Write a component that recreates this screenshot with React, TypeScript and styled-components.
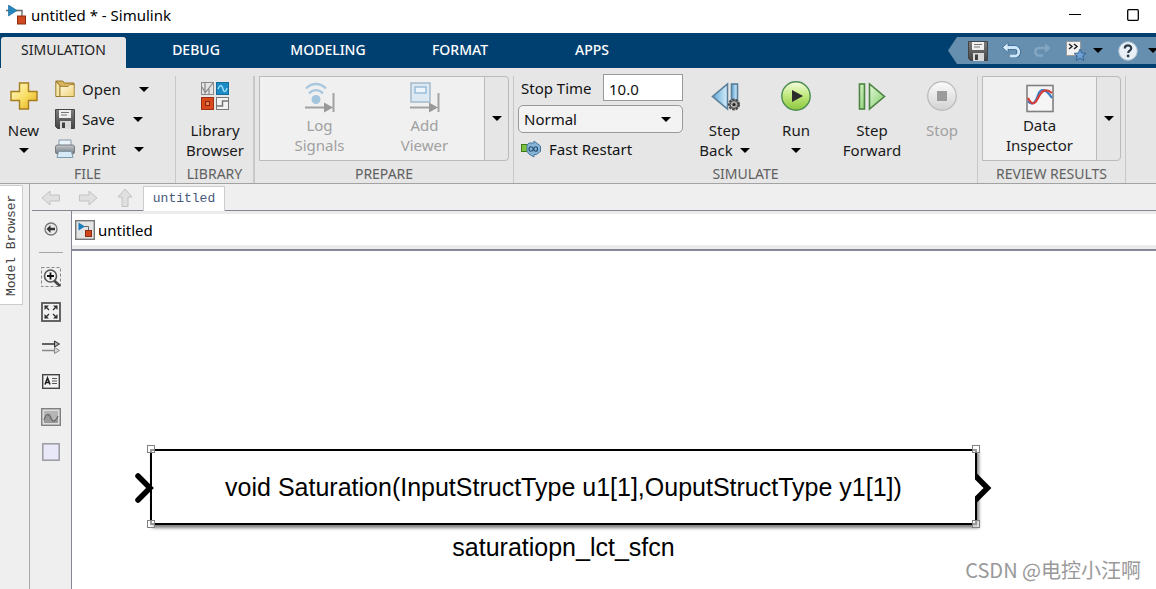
import React from "react";
import styled, { createGlobalStyle } from "styled-components";

const ui = `"Noto Sans", "Open Sans", sans-serif`;
const mono = `"Liberation Mono", monospace`;

const Global = createGlobalStyle`
  * { box-sizing: border-box; }
  body { margin: 0; background: #fff; }
  button, input, select { font: inherit; color: inherit; }
  button { border: 0; background: none; padding: 0; cursor: pointer; }
  svg { display: block; flex: none; }
`;

const Window = styled.div`
  display: flex;
  flex-direction: column;
  min-height: 100vh;
  overflow: hidden;
  font: 14px/20px ${ui};
  color: #1a1a1a;
`;

const TitleBar = styled.header`
  display: flex;
  align-items: center;
  height: 33px;
  padding: 0 0 4px 6px;
  background: #fff;
  color: #000;
`;
const Title = styled.h1`
  margin: 0 0 0 5px;
  flex: 1;
  font-size: 15px;
  font-weight: 400;
`;
const WindowButton = styled.button`
  display: flex;
  align-items: center;
  justify-content: center;
  width: 58px;
  height: 28px;
  &:last-child { margin-right: -6px; }
`;

const TabBar = styled.nav`
  display: flex;
  height: 35px;
  padding: 4px 0 0 1px;
  background: #004070;
`;
const Tabs = styled.div`
  display: flex;
  flex: 1;
`;
const Tab = styled.button<{ $active?: boolean }>`
  width: ${(p) => (p.$active ? 125 : 132)}px;
  margin-right: ${(p) => (p.$active ? 4 : 0)}px;
  padding-bottom: 6px;
  border-radius: 3px 3px 0 0;
  background: ${(p) => (p.$active ? "#e6e6e6" : "transparent")};
  color: ${(p) => (p.$active ? "#222" : "#fff")};
  font-weight: ${(p) => (p.$active ? 400 : 500)};
`;
const QuickAccess = styled.div`
  display: flex;
  align-items: center;
  height: 27px;
  padding-left: 20px;
  margin-right: -2px;
  background: #668eae;
  clip-path: polygon(9px 0, 100% 0, 100% 100%, 9px 100%, 0 50%);
`;
const QuickButton = styled.button<{ $w: number }>`
  display: flex;
  align-items: center;
  width: ${(p) => p.$w}px;
  height: 27px;
`;

const Ribbon = styled.div`
  display: flex;
  height: 116px;
  padding-top: 8px;
  border-bottom: 1px solid #a3a3a3;
  background: #e6e6e6;
  font-size: 15px;
`;
const Section = styled.section<{ $w: number; $thick?: boolean }>`
  display: flex;
  flex-direction: column;
  flex: none;
  width: ${(p) => p.$w}px;
  border-right: ${(p) => (p.$thick ? 2 : 1)}px solid #c8c8c8;
`;
const SectionBody = styled.div`
  display: flex;
  height: 89px;
  padding: 0 4px;
`;
const SectionName = styled.h2`
  margin: 0;
  font-size: 14px;
  line-height: 18px;
  font-weight: 400;
  text-align: center;
  color: #606060;
`;
const BigButton = styled.button<{ $w: number }>`
  display: flex;
  flex-direction: column;
  align-items: center;
  width: ${(p) => p.$w}px;
  padding-top: 5px;
  flex: none;
  &:disabled { color: #a0a0a0; cursor: default; }
`;
const IconSlot = styled.span`
  display: flex;
  align-items: center;
  height: 30px;
  margin-bottom: 9px;
`;
const Line = styled.span`
  display: flex;
  align-items: center;
  gap: 7px;
  height: 20px;
  white-space: nowrap;
`;
const Rows = styled.div`
  display: grid;
  grid-auto-rows: 30px;
  margin-top: -2px;
  padding-left: 12px;
`;
const Row = styled.div`
  display: flex;
  align-items: center;
`;
const RowButton = styled.button`
  display: flex;
  align-items: center;
  gap: 7px;
  margin-right: 15px;
`;
const CaretButton = styled.button`
  display: flex;
  align-items: center;
  justify-content: center;
  width: 16px;
  height: 20px;
`;
const Gallery = styled.div`
  display: flex;
  height: 85px;
  border: 1px solid #bababa;
  border-radius: 0 4px 4px 0;
`;
const GalleryItems = styled.div<{ $pad?: number }>`
  display: flex;
  padding: 0 ${(p) => p.$pad ?? 0}px;
  background: #f0f0f0;
  ${IconSlot} { height: 31px; margin-bottom: 2px; }
`;
const GalleryMore = styled.button`
  display: flex;
  align-items: center;
  justify-content: center;
  width: 24px;
  border-left: 1px solid #bababa;
`;
const Form = styled.div`
  width: 165px;
  margin: -2px 6px 0 0;
  color: #111;
`;
const Field = styled.label`
  display: flex;
  align-items: center;
  justify-content: space-between;
  padding-left: 3px;
`;
const TextInput = styled.input`
  width: 80px;
  height: 27px;
  padding: 2px 5px 0;
  border: 1px solid #999;
  background: #fff;
`;
const SelectBox = styled.div`
  display: grid;
  align-items: center;
  margin-top: 4px;
  & > * { grid-area: 1 / 1; }
  svg { justify-self: end; margin-right: 12px; pointer-events: none; }
`;
const Select = styled.select`
  appearance: none;
  width: 100%;
  height: 28px;
  padding: 0 5px;
  border: 1px solid #999;
  border-radius: 5px;
  background: #f3f3f3;
`;
const FastRestart = styled.button`
  display: flex;
  align-items: center;
  gap: 8px;
  margin-top: 6px;
  padding-left: 3px;
`;

const Workspace = styled.div`
  display: flex;
  flex: 1;
  background: #efefef;
`;
const BrowserStrip = styled.aside`
  width: 30px;
  padding-top: 1px;
  border-right: 1px solid #aaa;
`;
const BrowserTab = styled.button`
  width: 23px;
  height: 120px;
  padding-right: 2px;
  border: 1px solid #ccc;
  border-right: 0;
  background: #fff;
  color: #444;
  font: 13px/20px ${mono};
  writing-mode: vertical-rl;
  transform: rotate(180deg);
`;
const Editor = styled.div`
  display: flex;
  flex-direction: column;
  flex: 1;
  min-width: 0;
`;
const DocBar = styled.div`
  display: flex;
  height: 27px;
  margin-left: 2px;
  padding-top: 2px;
  border-bottom: 1px solid #858894;
`;
const NavButton = styled.button`
  width: 37px;
  display: flex;
  align-items: center;
  justify-content: center;
`;
const DocTab = styled.button`
  width: 82px;
  height: 25px;
  border: 1px solid #ccc;
  border-bottom: 0;
  background: #fff;
  color: #46597c;
  font: 13px/20px ${mono};
`;
const EditorBody = styled.div`
  display: flex;
  flex: 1;
`;
const Palette = styled.div`
  display: flex;
  flex-direction: column;
  align-items: center;
  width: 41px;
`;
const Tool = styled.button<{ $h?: number }>`
  display: flex;
  align-items: center;
  justify-content: center;
  width: 28px;
  height: ${(p) => p.$h ?? 35}px;
`;
const Rule = styled.hr`
  width: 24px;
  margin: 5px 0 6px;
  border: 0;
  border-top: 1px solid #a5a5a5;
`;
const Document = styled.main`
  display: flex;
  flex-direction: column;
  flex: 1;
  min-width: 0;
  border-left: 1px solid #858894;
`;
const Crumbs = styled.div`
  display: flex;
  align-items: center;
  gap: 3px;
  height: 40px;
  padding: 0 0 1px 3px;
  border-bottom: 2px solid #858894;
  color: #000;
  background: linear-gradient(#ececec 3px, #fff 3px 34px, #ececec 34px);
  font-size: 15px;
`;
const Canvas = styled.div`
  position: relative;
  flex: 1;
  min-height: 338px;
  background: #fff;
  font-family: "Liberation Sans", sans-serif;
  font-size: 25px;
  line-height: 28px;
  color: #000;
`;
const Node = styled.figure`
  position: absolute;
  left: 78px;
  top: 198px;
  width: 827px;
  margin: 0;
  text-align: center;
`;
const Block = styled.div`
  display: flex;
  align-items: center;
  justify-content: center;
  height: 76px;
  border: 2px solid #000;
  background: #fff;
  box-shadow: 2px 3px 3px rgba(0, 0, 0, 0.5);
`;
const Handle = styled.i<{ $x: "left" | "right"; $y: number }>`
  position: absolute;
  ${(p) => p.$x}: -3px;
  top: ${(p) => p.$y}px;
  width: 8px;
  height: 8px;
  border: 1px solid #808080;
  background: rgba(255, 255, 255, 0.6);
`;
const Port = styled.svg<{ $x: number }>`
  position: absolute;
  left: ${(p) => p.$x}px;
  top: 22px;
`;
const NodeName = styled.figcaption`
  margin-top: 8px;
`;
const Watermark = styled.div`
  position: absolute;
  right: 15px;
  bottom: 5px;
  font: 20px/28px "Noto Sans CJK SC", sans-serif;
  color: #999;
`;

const Caret = () => (
  <svg width="10" height="5" viewBox="0 0 10 5"><path d="M0 0h10L5 5z" fill="#000" /></svg>
);

const SimulinkIcon = () => (
  <svg width="20" height="20" viewBox="0 0 20 20">
    <path d="M0 5.500h3M10 5.500h6v6" stroke="#666" strokeWidth="1.300" fill="none" />
    <path d="M2.500 0v11L11 5.500z" fill="#2386c0" stroke="#14618f" strokeWidth=".6" />
    <rect x="11.500" y="11" width="8" height="8" fill="#d04a20" stroke="#8b2c10" />
  </svg>
);

const PlusIcon = () => (
  <svg width="28" height="28" viewBox="0 0 28 28">
    <defs><linearGradient id="gold" x2="1" y2="1"><stop stopColor="#fffbd0" /><stop offset=".55" stopColor="#f8dc60" /><stop offset="1" stopColor="#e0a818" /></linearGradient></defs>
    <path d="M9.500 1h9v8.500H27v9h-8.500V27h-9v-8.500H1v-9h8.500z" fill="url(#gold)" stroke="#a67c1c" strokeWidth="1.400" />
  </svg>
);

const FolderIcon = () => (
  <svg width="20" height="20" viewBox="0 0 20 20">
    <defs><linearGradient id="paper" x2="1" y2="1"><stop stopColor="#fffbe0" /><stop offset="1" stopColor="#efd27a" /></linearGradient></defs>
    <path d="M.8 2h7l1.500 2H19v4H6z" fill="#d8b45c" stroke="#8f6c1e" strokeWidth=".9" />
    <path d="M.8 2.500L5 6.500v11H.8z" fill="#f6e6a8" stroke="#8f6c1e" strokeWidth=".9" />
    <path d="M5 17.500V7.500h8l2-2h4.200v12z" fill="url(#paper)" stroke="#a27f2c" strokeWidth=".9" />
  </svg>
);

const DiskIcon = () => (
  <svg width="20" height="20" viewBox="0 0 20 20">
    <defs><linearGradient id="steel" x2="0" y2="1"><stop stopColor="#7c7c7c" /><stop offset="1" stopColor="#454545" /></linearGradient></defs>
    <path d="M.5.500h19v19h-17l-2-2z" fill="url(#steel)" stroke="#444" />
    <path d="M4 1h12v8H4z" fill="#efefef" />
    <path d="M6 3.500h8M6 6h6" stroke="#777" strokeWidth="1.200" />
    <path d="M5 12h11v8H5z" fill="#d8d8d8" />
    <path d="M7 13.500h3V19H7z" fill="#404040" />
  </svg>
);

const PrinterIcon = () => (
  <svg width="20" height="20" viewBox="0 0 20 20">
    <defs><linearGradient id="body" x2="0" y2="1"><stop stopColor="#c4c8cc" /><stop offset="1" stopColor="#71777d" /></linearGradient></defs>
    <path d="M4 1h12v7H4z" fill="#eaf3fa" stroke="#8898a6" />
    <rect x=".5" y="6" width="19" height="9" rx="2" fill="url(#body)" stroke="#767c82" />
    <path d="M3.500 12.500h13l1.500 6H2z" fill="#d5e9f7" stroke="#7e98ac" />
  </svg>
);

const LibraryIcon = () => (
  <svg width="28" height="28" viewBox="0 0 28 28">
    <rect x=".5" y=".5" width="12" height="12" fill="#e4e4e4" stroke="#8a8a8a" />
    <path d="M4 1v10l8-10M4 10L1 5M8 12V7" stroke="#888" strokeWidth="1.200" fill="none" />
    <rect x="15.500" y=".5" width="12" height="12" fill="#1b8bc6" stroke="#186b9a" />
    <path d="M17 7c2-5 4-4 5 0s3 3 4-1" stroke="#a6e2ff" strokeWidth="1.300" fill="none" />
    <rect x=".5" y="15.500" width="12" height="12" fill="#d9491c" stroke="#9c3212" />
    <rect x="4.500" y="19.500" width="4" height="4" fill="#ee7c56" stroke="#842508" />
    <rect x="15.500" y="15.500" width="12" height="12" fill="#f2f2f2" stroke="#777" />
    <path d="M16 24h5.500v-5H27" stroke="#777" strokeWidth="1.500" fill="none" />
  </svg>
);

const ArrowLine = () => (
  <>
    <path d="M0 25.500h22M28.500 11v19" stroke="#a2a2a2" strokeWidth="2" />
    <path d="M19 20.500v10l9-5z" fill="#999" />
  </>
);
const LogIcon = () => (
  <svg width="30" height="31" viewBox="0 0 30 31">
    <path d="M1 6.500c6-6 14-6 20 0M4 11.500c4-4.500 10-4.500 14 0" stroke="#a9c8df" strokeWidth="2.400" fill="none" />
    <circle cx="11" cy="17.500" r="4.500" fill="#a4c5de" />
    <ArrowLine />
  </svg>
);
const ViewerIcon = () => (
  <svg width="30" height="31" viewBox="0 0 30 31">
    <rect x="1" y="1" width="19" height="19" fill="#dce9f3" stroke="#9fb6c8" strokeWidth="1.400" />
    <rect x="5" y="5" width="11" height="6" fill="#eef5fa" stroke="#94bad8" strokeWidth="1.400" />
    <ArrowLine />
  </svg>
);

const FastRestartIcon = () => (
  <svg width="20" height="18" viewBox="0 0 20 18">
    <rect x=".5" y="4.500" width="7" height="7" fill="#7fc241" stroke="#3e7a1c" />
    <path d="M8 3h5V1l6.500 5v5.500l-4 3H13V17l-5-3-2-2.500V5z" fill="#86b4d6" stroke="#47799f" />
    <path d="M8 9c0-3 3.500-3 4.500 0s4 3 4 0-3-3-4 0S8 12 8 9" stroke="#234d70" strokeWidth="1.200" fill="none" />
  </svg>
);

const StepBackIcon = () => (
  <svg width="30" height="30" viewBox="0 0 30 30">
    <defs><linearGradient id="blue" x2="1"><stop stopColor="#5fa6d4" /><stop offset="1" stopColor="#d8effc" /></linearGradient></defs>
    <path d="M17.500 3v25L2.500 15.500z" fill="url(#blue)" stroke="#5b7f9a" strokeWidth="1.600" />
    <rect x="21.500" y="3" width="6" height="20" fill="url(#blue)" stroke="#5b7f9a" strokeWidth="1.600" />
    <circle cx="24" cy="23.500" r="5" fill="#b5b5b5" stroke="#484848" strokeWidth="2" strokeDasharray="2.500 1" />
    <circle cx="24" cy="23.500" r="4" fill="#aaa" stroke="#444" />
    <circle cx="24" cy="23.500" r="1.600" fill="#222" />
  </svg>
);
const RunIcon = () => (
  <svg width="30" height="30" viewBox="0 0 30 30">
    <defs><linearGradient id="lime" x2="0" y2="1"><stop stopColor="#f5ffe0" /><stop offset=".5" stopColor="#bfe77a" /><stop offset="1" stopColor="#8cc63e" /></linearGradient></defs>
    <circle cx="15" cy="15" r="14.200" fill="url(#lime)" stroke="#4d8c50" strokeWidth="1.400" />
    <path d="M11 9v12l11-6z" fill="#2b2b2b" />
  </svg>
);
const StepForwardIcon = () => (
  <svg width="30" height="30" viewBox="0 0 30 30">
    <defs><linearGradient id="mint" x2="1" y2="1"><stop stopColor="#e2f8d8" /><stop offset="1" stopColor="#84cc6c" /></linearGradient></defs>
    <rect x="2.500" y="3" width="5" height="25" fill="url(#mint)" stroke="#4b8440" strokeWidth="1.600" />
    <path d="M12.500 3v25L27.500 15.500z" fill="url(#mint)" stroke="#4b8440" strokeWidth="1.600" />
  </svg>
);
const StopIcon = () => (
  <svg width="30" height="30" viewBox="0 0 30 30">
    <defs><linearGradient id="pale" x2="0" y2="1"><stop stopColor="#fbfbfb" /><stop offset="1" stopColor="#d2d2d2" /></linearGradient></defs>
    <circle cx="15" cy="15" r="14.300" fill="url(#pale)" stroke="#b8b8b8" strokeWidth="1.200" />
    <rect x="10" y="10" width="10" height="10" fill="#9b9b9b" />
  </svg>
);
const InspectorIcon = () => (
  <svg width="28" height="31" viewBox="0 0 28 31">
    <rect x="1" y="3.500" width="26" height="26" fill="#f5f5f5" stroke="#808080" strokeWidth="1.600" />
    <path d="M2 19c5 6 8 0 10-6s7-8 14 3" stroke="#3a7fc4" strokeWidth="2.200" fill="none" />
    <path d="M2 16c4 8 7 6 10 0s7-11 14-5" stroke="#d63c3c" strokeWidth="2.200" fill="none" />
  </svg>
);

const UndoIcon = () => (
  <svg width="20" height="18" viewBox="0 0 20 18">
    <path d="M5 5.500h8c5 0 5 8.500 0 8.500H8" stroke="#2f5f88" strokeWidth="4.200" fill="none" />
    <path d="M.5 5.500L6 .5v10z" fill="#dcefff" stroke="#2f5f88" strokeWidth=".7" />
    <path d="M5 5.500h8c5 0 5 8.500 0 8.500H8" stroke="#cde6f9" strokeWidth="2.800" fill="none" />
  </svg>
);
const RedoIcon = () => (
  <svg width="18" height="18" viewBox="0 0 18 18">
    <path d="M13 6H6c-5 0-5 7.500 0 7.500h4" stroke="#82a6c2" strokeWidth="2.600" fill="none" />
    <path d="M17.500 6L12 1v10z" fill="#82a6c2" />
  </svg>
);
const ShortcutIcon = () => (
  <svg width="20" height="20" viewBox="0 0 20 20">
    <rect x=".5" y=".5" width="14" height="14" fill="#f2f2f2" stroke="#999" />
    <path d="M3 3l3 2.500L3 8M8 3l3 2.500L8 8" stroke="#222" strokeWidth="1.500" fill="none" />
    <path d="M14 8l1.800 4 4.200.4-3.200 2.700 1 4.400-3.800-2.300-3.800 2.300 1-4.400L8 12.400l4.200-.4z" fill="#6d9fd0" stroke="#2b5a8c" strokeWidth=".8" />
  </svg>
);
const HelpIcon = () => (
  <svg width="20" height="20" viewBox="0 0 20 20">
    <circle cx="10" cy="10" r="9.300" fill="#e9f0f6" stroke="#adc0d0" />
    <path d="M6.800 7.500c0-4 6.400-4 6.400-.3 0 2.400-3 2.400-3 4.800" stroke="#2a3b4c" strokeWidth="2.200" fill="none" />
    <circle cx="10.100" cy="15" r="1.400" fill="#2a3b4c" />
  </svg>
);

const NavArrow = ({ turn }: { turn: number }) => (
  <svg width="20" height="20" viewBox="0 0 20 20">
    <path transform={`rotate(${turn} 10 10)`} d="M1 10l8-7v4h9.500v6H9v4z" fill="#e0e0e0" stroke="#c2c2c2" />
  </svg>
);
const CollapseIcon = () => (
  <svg width="14" height="14" viewBox="0 0 14 14">
    <circle cx="7" cy="7" r="6" fill="#eaeaea" stroke="#777" strokeWidth="1.300" />
    <path d="M2.500 7L6.500 3v2.700H11v2.600H6.500V11z" fill="#333" />
  </svg>
);
const ZoomIcon = () => (
  <svg width="20" height="20" viewBox="0 0 20 20">
    <rect x=".5" y=".5" width="19" height="19" fill="none" stroke="#888" strokeDasharray="3 2" />
    <path d="M13 13.500l6 5.500" stroke="#444" strokeWidth="2.600" />
    <circle cx="9.500" cy="9" r="6" fill="#f3f3f3" stroke="#555" strokeWidth="1.600" />
    <path d="M6 9h7M9.500 5.500v7" stroke="#111" strokeWidth="1.800" />
  </svg>
);
const FitIcon = () => (
  <svg width="20" height="20" viewBox="0 0 20 20">
    <rect x="1" y="1" width="18" height="18" fill="#f2f2f2" stroke="#555" strokeWidth="1.800" />
    <path d="M3.500 3.500H8L3.500 8zM16.500 3.500H12L16.500 8zM3.500 16.500H8L3.500 12zM16.500 16.500H12L16.500 12z" fill="#333" />
    <path d="M4 4l4 4M16 4l-4 4M4 16l4-4M16 16l-4-4" stroke="#333" strokeWidth="1.400" />
  </svg>
);
const SampleIcon = () => (
  <svg width="20" height="14" viewBox="0 0 20 14">
    <path d="M1 4h13" stroke="#333" strokeWidth="1.500" /><path d="M13.500 1v6l5-3z" fill="#aaa" stroke="#333" />
    <path d="M1 10.500h13" stroke="#888" strokeWidth="1.500" /><path d="M13.500 7.500v6l5-3z" fill="#ddd" stroke="#888" />
  </svg>
);
const NoteIcon = () => (
  <svg width="18" height="15" viewBox="0 0 18 15">
    <rect x=".7" y=".7" width="16.600" height="13.600" fill="#f3f3f3" stroke="#444" strokeWidth="1.400" />
    <path d="M3 10.500L5.500 4 8 10.500M4 8.500h3.500" stroke="#222" strokeWidth="1.600" fill="none" />
    <path d="M10 4.500h5M10 7h5M10 9.500h5" stroke="#555" />
  </svg>
);
const ImageIcon = () => (
  <svg width="20" height="18" viewBox="0 0 20 18">
    <rect x=".7" y=".7" width="18.600" height="16.600" fill="#ddd" stroke="#808080" strokeWidth="1.400" />
    <rect x="3" y="3" width="14" height="12" fill="#b5b5b5" />
    <path d="M3 12c2-7 5-7 7-2s3 4 7-2v7H3z" fill="#999" />
    <path d="M3 12c2-7 5-7 7-2s4 4 7-2" stroke="#666" strokeWidth="1.200" fill="none" />
  </svg>
);
const AreaIcon = () => (
  <svg width="18" height="18" viewBox="0 0 18 18">
    <rect x=".8" y=".8" width="16.400" height="16.400" fill="#e8e8f8" stroke="#9a9aa2" strokeWidth="1.500" />
  </svg>
);

const ModelIcon = () => (
  <svg width="20" height="20" viewBox="0 0 20 20">
    <rect x=".7" y=".7" width="18.600" height="18.600" fill="#e4e4e4" stroke="#777" strokeWidth="1.400" />
    <path d="M9 6.500h4.500V11" stroke="#666" fill="none" />
    <path d="M3.500 2.500v8l6.500-4z" fill="#1d7db8" />
    <rect x="10.500" y="10.500" width="6" height="6" fill="#d0461c" stroke="#8b2c10" />
  </svg>
);

const fileActions = [
  { name: "Open", icon: <FolderIcon /> },
  { name: "Save", icon: <DiskIcon /> },
  { name: "Print", icon: <PrinterIcon /> },
];

const tools = [
  { name: "Zoom", icon: <ZoomIcon /> },
  { name: "Fit to view", icon: <FitIcon /> },
  { name: "Sample time", icon: <SampleIcon /> },
  { name: "Annotation", icon: <NoteIcon /> },
  { name: "Image", icon: <ImageIcon /> },
  { name: "Area", icon: <AreaIcon /> },
];

type ActionProps = { w: number; icon: React.ReactNode; top: string; bottom?: React.ReactNode; disabled?: boolean };
const Action = ({ w, icon, top, bottom, disabled }: ActionProps) => (
  <BigButton $w={w} disabled={disabled}>
    <IconSlot>{icon}</IconSlot>
    <Line>{top}</Line>
    {bottom && <Line>{bottom}</Line>}
  </BigButton>
);

export default function App() {
  return (
    <Window>
      <Global />
      <TitleBar>
        <SimulinkIcon />
        <Title>untitled * - Simulink</Title>
        <WindowButton aria-label="Minimize">
          <svg width="12" height="12" viewBox="0 0 12 12"><path d="M0 5.500h12" stroke="#000" /></svg>
        </WindowButton>
        <WindowButton aria-label="Maximize">
          <svg width="12" height="12" viewBox="0 0 12 12"><rect x=".7" y=".7" width="10.600" height="10.600" rx="1" fill="none" stroke="#000" strokeWidth="1.300" /></svg>
        </WindowButton>
      </TitleBar>

      <TabBar>
        <Tabs role="tablist">
          <Tab role="tab" aria-selected $active>SIMULATION</Tab>
          {["DEBUG", "MODELING", "FORMAT", "APPS"].map((t) => <Tab role="tab" key={t}>{t}</Tab>)}
        </Tabs>
        <QuickAccess>
          <QuickButton $w={34} aria-label="Save"><DiskIcon /></QuickButton>
          <QuickButton $w={31} aria-label="Undo"><UndoIcon /></QuickButton>
          <QuickButton $w={33} aria-label="Redo"><RedoIcon /></QuickButton>
          <QuickButton $w={27} aria-label="Shortcuts"><ShortcutIcon /></QuickButton>
          <QuickButton $w={25} aria-label="More shortcuts"><Caret /></QuickButton>
          <QuickButton $w={30} aria-label="Help"><HelpIcon /></QuickButton>
          <QuickButton $w={10} aria-label="More help"><Caret /></QuickButton>
        </QuickAccess>
      </TabBar>

      <Ribbon>
        <Section $w={176}>
          <SectionBody>
            <Action w={39} icon={<PlusIcon />} top="New" bottom={<Caret />} />
            <Rows>
              {fileActions.map((a) => (
                <Row key={a.name}>
                  <RowButton>{a.icon}{a.name}</RowButton>
                  <CaretButton aria-label={`${a.name} options`}><Caret /></CaretButton>
                </Row>
              ))}
            </Rows>
          </SectionBody>
          <SectionName>FILE</SectionName>
        </Section>

        <Section $w={79} $thick>
          <SectionBody>
            <Action w={70} icon={<LibraryIcon />} top="Library" bottom="Browser" />
          </SectionBody>
          <SectionName>LIBRARY</SectionName>
        </Section>

        <Section $w={259}>
          <SectionBody>
            <Gallery>
              <GalleryItems $pad={7}>
                <Action w={105} icon={<LogIcon />} top="Log" bottom="Signals" disabled />
                <Action w={105} icon={<ViewerIcon />} top="Add" bottom="Viewer" disabled />
              </GalleryItems>
              <GalleryMore aria-label="More prepare tools"><Caret /></GalleryMore>
            </Gallery>
          </SectionBody>
          <SectionName>PREPARE</SectionName>
        </Section>

        <Section $w={464}>
          <SectionBody>
            <Form>
              <Field>Stop Time<TextInput defaultValue="10.0" /></Field>
              <SelectBox>
                <Select aria-label="Simulation mode" defaultValue="Normal"><option>Normal</option></Select>
                <Caret />
              </SelectBox>
              <FastRestart><FastRestartIcon />Fast Restart</FastRestart>
            </Form>
            <Action w={71} icon={<StepBackIcon />} top="Step" bottom={<>Back <Caret /></>} />
            <Action w={72} icon={<RunIcon />} top="Run" bottom={<Caret />} />
            <Action w={80} icon={<StepForwardIcon />} top="Step" bottom="Forward" />
            <Action w={60} icon={<StopIcon />} top="Stop" disabled />
          </SectionBody>
          <SectionName>SIMULATE</SectionName>
        </Section>

        <Section $w={148}>
          <SectionBody>
            <Gallery>
              <GalleryItems>
                <Action w={113} icon={<InspectorIcon />} top="Data" bottom="Inspector" />
              </GalleryItems>
              <GalleryMore aria-label="More results tools"><Caret /></GalleryMore>
            </Gallery>
          </SectionBody>
          <SectionName>REVIEW RESULTS</SectionName>
        </Section>
      </Ribbon>

      <Workspace>
        <BrowserStrip><BrowserTab>Model Browser</BrowserTab></BrowserStrip>
        <Editor>
          <DocBar>
            <NavButton aria-label="Back"><NavArrow turn={0} /></NavButton>
            <NavButton aria-label="Forward"><NavArrow turn={180} /></NavButton>
            <NavButton aria-label="Up"><NavArrow turn={90} /></NavButton>
            <DocTab>untitled</DocTab>
          </DocBar>
          <EditorBody>
            <Palette>
              <Tool $h={36} aria-label="Hide browser"><CollapseIcon /></Tool>
              <Rule />
              {tools.map((t) => <Tool key={t.name} aria-label={t.name}>{t.icon}</Tool>)}
            </Palette>
            <Document>
              <Crumbs><ModelIcon />untitled</Crumbs>
              <Canvas>
                <Node>
                  <Block>void Saturation(InputStructType u1[1],OuputStructType y1[1])</Block>
                  <Port $x={-16} width="20" height="34" viewBox="0 0 20 34">
                    <path d="M4 5l12 12L4 29" stroke="#000" strokeWidth="5.500" strokeLinecap="round" fill="none" />
                  </Port>
                  <Port $x={825} width="20" height="34" viewBox="0 0 20 34">
                    <path d="M0 4.500L12.500 17 0 29.500" stroke="#000" strokeWidth="5.500" fill="#fff" />
                  </Port>
                  <Handle $x="left" $y={-4} />
                  <Handle $x="right" $y={-4} />
                  <Handle $x="left" $y={71} />
                  <Handle $x="right" $y={71} />
                  <NodeName>saturatiopn_lct_sfcn</NodeName>
                </Node>
                <Watermark>CSDN @电控小汪啊</Watermark>
              </Canvas>
            </Document>
          </EditorBody>
        </Editor>
      </Workspace>
    </Window>
  );
}
